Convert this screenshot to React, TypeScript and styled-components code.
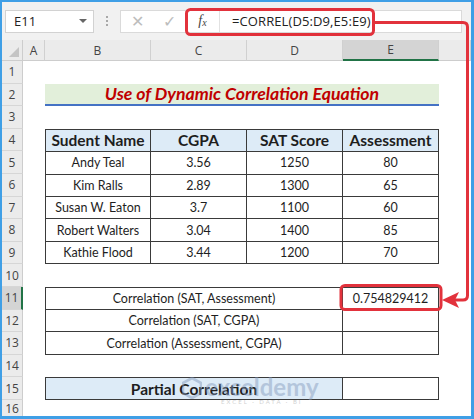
import React from "react";
import styled, { createGlobalStyle } from "styled-components";

// ------------------------------------------------
// Style
// ------------------------------------------------

const GlobalStyle = createGlobalStyle`
  html, body {
    margin: 0;
    padding: 0;
    background: #fff;
  }
  body {
    font-family: Lato, "Open Sans", sans-serif;
  }
`;

const Frame = styled.div`
  position: relative;
  width: 474px;
  height: 419px;
  box-sizing: border-box;
  border: 3px solid #3f9fe6;
  border-top-width: 2px;
  border-left-width: 2px;
  display: flex;
  flex-direction: column;
  overflow: hidden;
  background: #fff;
`;

const Toolbar = styled.div`
  height: 38px;
  flex: none;
  display: flex;
  align-items: center;
  padding: 0 9px 0 3px;
  background: #f1f1f1;
  font-family: "Open Sans", "Noto Sans", sans-serif;
`;

const NameBox = styled.div`
  width: 89px;
  height: 23px;
  box-sizing: border-box;
  background: #fff;
  border: 1px solid #d2d2d2;
  display: flex;
  align-items: center;
  justify-content: space-between;
  padding: 0 6px 0 8px;
  font-size: 13px;
  color: #222;
`;

const Caret = styled.span`
  width: 0;
  height: 0;
  border-left: 4px solid transparent;
  border-right: 4px solid transparent;
  border-top: 4px solid #666;
`;

const Dots = styled.div`
  width: 26px;
  display: flex;
  flex-direction: column;
  align-items: center;
  gap: 2px;
`;

const Dot = styled.span`
  width: 2px;
  height: 2px;
  background: #a8a8a8;
`;

const FormulaBar = styled.div`
  flex: 1;
  height: 23px;
  box-sizing: border-box;
  background: #fff;
  border: 1px solid #dadada;
  display: flex;
  align-items: center;
`;

const ToolBtn = styled.div`
  width: 32px;
  height: 100%;
  display: flex;
  align-items: center;
  justify-content: center;
  color: #bdbdbd;
  font-size: 16px;
`;

const FxBtn = styled(ToolBtn)`
  width: 33px;
  border-left: 1px solid #e2e2e2;
  border-right: 1px solid #e2e2e2;
  color: #444;
  font-family: "Liberation Serif", serif;
  font-style: italic;
  font-size: 14px;
  small {
    font-size: 10px;
    margin-top: 3px;
  }
`;

const FormulaText = styled.div`
  padding-left: 12px;
  font-size: 13px;
  color: #222;
  letter-spacing: 0.1px;
`;

const Sheet = styled.div`
  flex: 1;
  display: grid;
  grid-template-columns: 21px 22px 106px 96px 96px 96px 1fr;
  grid-template-rows: 21px repeat(15, 22.6px) 1fr;
  overflow: hidden;
`;

const Corner = styled.div`
  position: relative;
  background: #ebebeb;
  border-right: 1px solid #cdcdcd;
  border-bottom: 1px solid #cdcdcd;
  &::after {
    content: "";
    position: absolute;
    right: 3px;
    bottom: 3px;
    border-left: 10px solid transparent;
    border-bottom: 10px solid #c4c4c4;
  }
`;

const ColHead = styled.div<{ $active?: boolean }>`
  box-sizing: border-box;
  display: flex;
  align-items: center;
  justify-content: center;
  background: ${(p) => (p.$active ? "#d4d4d4" : "#ebebeb")};
  border-right: 1px solid #d0d0d0;
  border-bottom: ${(p) => (p.$active ? "2px solid #217346" : "1px solid #cdcdcd")};
  font-family: "Open Sans", sans-serif;
  font-size: 12px;
  color: #444;
`;

const RowHead = styled.div<{ $active?: boolean }>`
  box-sizing: border-box;
  grid-column: 1;
  display: flex;
  align-items: center;
  justify-content: center;
  background: ${(p) => (p.$active ? "#d4d4d4" : "#ebebeb")};
  border-bottom: 1px solid #d6d6d6;
  border-right: ${(p) => (p.$active ? "2px solid #217346" : "1px solid #cdcdcd")};
  font-family: "Open Sans", sans-serif;
  font-size: 12px;
  color: #444;
`;

const Title = styled.div`
  grid-row: 3;
  grid-column: 3 / 7;
  box-sizing: border-box;
  display: flex;
  align-items: center;
  justify-content: center;
  background: #e2efda;
  border-bottom: 2px solid #4472c4;
  color: #c00000;
  font-weight: 700;
  font-style: italic;
  font-size: 17.7px;
`;

const Block = styled.div<{ $row: string; $rows: number }>`
  grid-row: ${(p) => p.$row};
  grid-column: 3 / 7;
  display: grid;
  grid-template-columns: 1fr 96px 96px 96px;
  grid-template-rows: repeat(${(p) => p.$rows}, 1fr);
  border-top: 1px solid #3a3a3a;
  border-left: 1px solid #3a3a3a;
`;

const Cell = styled.div<{ $head?: boolean; $span?: number; $fill?: string }>`
  grid-column: span ${(p) => p.$span ?? 1};
  display: flex;
  align-items: center;
  justify-content: center;
  border-right: 1px solid #3a3a3a;
  border-bottom: 1px solid #3a3a3a;
  background: ${(p) => p.$fill ?? (p.$head ? "#ddebf7" : "#fff")};
  color: #1e1e1e;
  font-size: ${(p) => (p.$head ? "15.5px" : "12.5px")};
  font-weight: ${(p) => (p.$head ? 700 : 400)};
  white-space: nowrap;
`;

const Overlay = styled.svg`
  position: absolute;
  left: -2px;
  top: -2px;
  pointer-events: none;
`;

const Watermark = styled.div`
  position: absolute;
  left: 180px;
  top: 373px;
  display: flex;
  align-items: flex-start;
  gap: 3px;
  opacity: 0.45;
  color: #8298bb;
  pointer-events: none;
`;

const MarkWord = styled.div`
  display: flex;
  flex-direction: column;
  align-items: center;
  line-height: 1;
  b {
    font-size: 24px;
    font-weight: 700;
  }
  span {
    font-size: 6px;
    letter-spacing: 2px;
    margin-top: 0;
    color: #9a9a9a;
  }
`;

// ------------------------------------------------
// Data
// ------------------------------------------------

const columns = ["A", "B", "C", "D", "E", ""];

const students = [
  ["Andy Teal", "3.56", "1250", "80"],
  ["Kim Ralls", "2.89", "1300", "65"],
  ["Susan W. Eaton", "3.7", "1100", "60"],
  ["Robert Walters", "3.04", "1400", "85"],
  ["Kathie Flood", "3.44", "1200", "70"],
];

const correlations = [
  ["Correlation (SAT, Assessment)", "0.754829412"],
  ["Correlation (SAT, CGPA)", ""],
  ["Correlation (Assessment, CGPA)", ""],
];

const RED = "#e2323c";

// ------------------------------------------------
// View
// ------------------------------------------------

const App = () => {
  return (
    <>
      <GlobalStyle />
      <Frame>
        <Toolbar>
          <NameBox>
            E11
            <Caret />
          </NameBox>
          <Dots>
            <Dot />
            <Dot />
            <Dot />
          </Dots>
          <FormulaBar>
            <ToolBtn>✕</ToolBtn>
            <ToolBtn>✓</ToolBtn>
            <FxBtn>
              f<small>x</small>
            </FxBtn>
            <FormulaText>=CORREL(D5:D9,E5:E9)</FormulaText>
          </FormulaBar>
        </Toolbar>

        <Sheet>
          <Corner />
          {columns.map((c, i) => (
            <ColHead key={i} $active={c === "E"}>
              {c}
            </ColHead>
          ))}
          {Array.from({ length: 16 }, (_, i) => (
            <RowHead key={i} $active={i + 1 === 11} style={{ gridRow: i + 2 }}>
              {i + 1}
            </RowHead>
          ))}

          <Title>Use of Dynamic Correlation Equation</Title>

          <Block $row="5 / 11" $rows={6}>
            <Cell $head>Sudent Name</Cell>
            <Cell $head>CGPA</Cell>
            <Cell $head>SAT Score</Cell>
            <Cell $head>Assessment</Cell>
            {students.map((r) =>
              r.map((v, j) => <Cell key={r[0] + j}>{v}</Cell>)
            )}
          </Block>

          <Block $row="12 / 15" $rows={3}>
            {correlations.map(([label, value]) => (
              <React.Fragment key={label}>
                <Cell $span={3}>{label}</Cell>
                <Cell>{value}</Cell>
              </React.Fragment>
            ))}
          </Block>

          <Block $row="16" $rows={1}>
            <Cell $span={3} $head>
              Partial Correlation
            </Cell>
            <Cell $fill="#fff" />
          </Block>
        </Sheet>

        <Watermark>
          <svg width="20" height="22" viewBox="0 0 22 24" style={{ marginTop: 2 }}>
            <path d="M11 1 L21 6.5 V17.5 L11 23 L1 17.5 V6.5 Z" fill="none" stroke="currentColor" strokeWidth="3" />
          </svg>
          <MarkWord>
            <b>exceldemy</b>
            <span>EXCEL · DATA · BI</span>
          </MarkWord>
        </Watermark>

        <Overlay width="474" height="419" viewBox="0 0 474 419">
          <rect x="186.5" y="9.5" width="187" height="25" rx="4" fill="none" stroke={RED} strokeWidth="3" />
          <rect x="341" y="285.5" width="100" height="24" rx="4" fill="none" stroke={RED} strokeWidth="3" />
          <path
            d="M374 22.5 H463 Q467.5 22.5 467.5 27 V295.5 Q467.5 300 463 300 H452"
            fill="none"
            stroke={RED}
            strokeWidth="3"
          />
          <polygon points="442,300 459,292 455,300 459,308" fill={RED} />
        </Overlay>
      </Frame>
    </>
  );
};

export default App;
